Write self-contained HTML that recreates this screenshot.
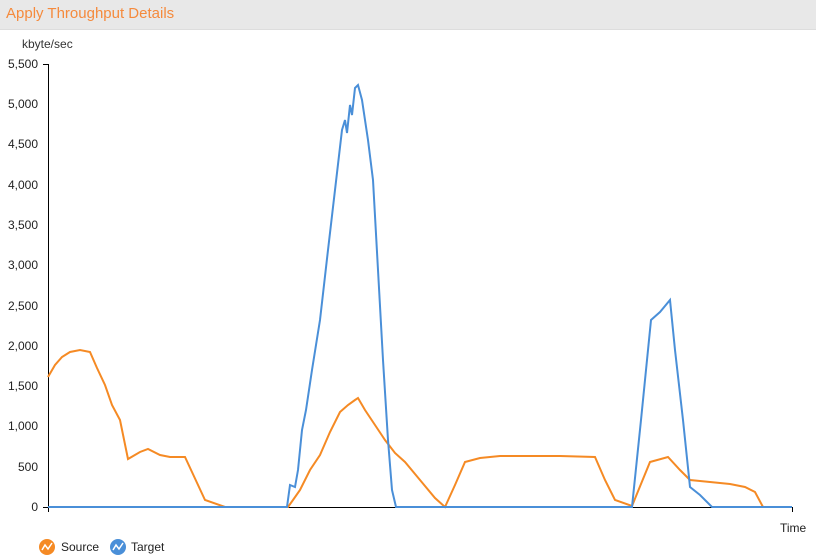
<!DOCTYPE html>
<html><head><style>
body{margin:0;width:816px;height:560px;background:#fff;font-family:"Liberation Sans",sans-serif;overflow:hidden}
.hd{height:29px;background:#e8e8e8;border-bottom:1px solid #ddd;color:#f58a3c;font-size:15px;line-height:28px;padding-left:6px}
</style></head><body>
<div class="hd">Apply Throughput Details</div>
<svg width="816" height="530" viewBox="0 30 816 530" style="position:absolute;top:30px;left:0" font-family="Liberation Sans, sans-serif" font-size="12" fill="#222">
<text x="22" y="48" fill="#333">kbyte/sec</text>
<g text-anchor="end">
<text x="38" y="68">5,500</text><text x="38" y="108">5,000</text><text x="38" y="148">4,500</text><text x="38" y="189">4,000</text><text x="38" y="229">3,500</text><text x="38" y="269">3,000</text><text x="38" y="310">2,500</text><text x="38" y="350">2,000</text><text x="38" y="390">1,500</text><text x="38" y="430">1,000</text><text x="38" y="471">500</text><text x="38" y="511">0</text>
</g>
<g stroke="#000" stroke-width="1">
<line x1="48.5" y1="64" x2="48.5" y2="512"/>
<line x1="43" y1="64.5" x2="48" y2="64.5"/>
<line x1="43" y1="507.5" x2="48" y2="507.5"/>
<line x1="48" y1="507.5" x2="792" y2="507.5"/>
<line x1="792.5" y1="507" x2="792.5" y2="512"/>
</g>
<text x="780" y="532">Time</text>
<polyline fill="none" stroke="#f58a24" stroke-width="2" points="48,377 55,365 62,357 70,352 80,350 90,352 97,368 105,385 112,405 120,420 128,459 140,452 148,449 160,455 170,457 185,457 205,500 225,507 288,507 293,500 300,490 310,470 320,455 330,432 340,412 348,405 355,400 358,398 365,410 375,425 385,440 395,453 405,462 420,480 435,498 445,507 455,485 465,462 480,458 500,456 535,456 560,456 595,457 605,480 615,500 632,506 650,462 668,457 680,470 690,480 700,481 730,484 745,487 755,492 763,507 792,507"/>
<polyline fill="none" stroke="#4a8fd8" stroke-width="2" points="48,507 287,507 290,485 295,487 298,470 302,430 306,410 312,370 320,320 328,250 335,190 342,130 345,120 347,133 350,105 352,115 355,88 358,85 362,100 368,140 373,180 378,270 383,360 388,440 392,490 396,507 632,507 641,420 651,320 660,312 670,300 675,350 683,420 690,487 700,495 712,507 792,507"/>
<circle cx="47" cy="547" r="8" fill="#f58a24"/>
<polyline points="42,550 45,545 48,549 52,543" fill="none" stroke="#fff" stroke-width="1.5"/>
<text x="61" y="551">Source</text>
<circle cx="118" cy="547" r="8" fill="#4a8fd8"/>
<polyline points="113,550 116,545 119,549 123,543" fill="none" stroke="#fff" stroke-width="1.5"/>
<text x="131" y="551">Target</text>
</svg>
</body></html>
